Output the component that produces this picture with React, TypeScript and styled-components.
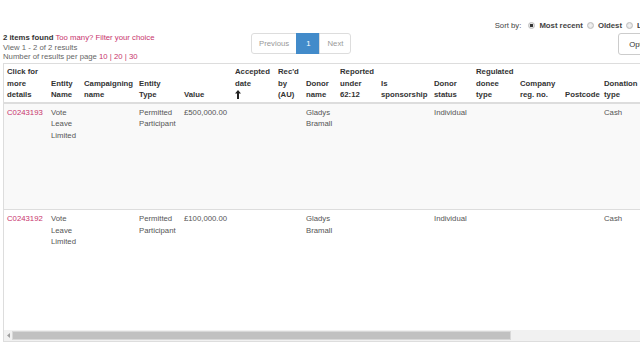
import styled, { createGlobalStyle } from "styled-components";

const GlobalStyle = createGlobalStyle`
  html, body {
    margin: 0;
    padding: 0;
    overflow: hidden;
    background: #fff;
  }
  body {
    font-family: "Liberation Sans", Arial, sans-serif;
    font-size: 7.75px;
    color: #333;
  }
`;

const PINK = "#c8336c";

const Page = styled.div`
  width: 700px;
  padding-top: 19px;
`;

//top bar
const SortRow = styled.div`
  height: 12px;
  padding-right: 35px;

  display: flex;
  justify-content: flex-end;
  align-items: center;
  gap: 4px;

  color: #444;
`;
const SortTitle = styled.span`
  margin-right: 3px;
`;
const RadioOption = styled.label`
  display: flex;
  align-items: center;
  gap: 4px;

  font-weight: bold;
  color: #444;
`;
const Radio = styled.input`
  appearance: none;
  width: 7px;
  height: 7px;
  margin: 0;
  border-radius: 50%;
  border: 1px solid #bdbdbd;
  background: radial-gradient(circle, #f4f4f4 0, #dcdcdc 100%);
  box-sizing: border-box;

  &:checked {
    background: radial-gradient(circle, #333 0 1.4px, #e6e6e6 1.8px);
  }
`;
const Toolbar = styled.div`
  height: 30px;
  margin-top: 2px;
  padding-right: 33px;

  display: flex;
  align-items: flex-start;
`;
const Info = styled.div`
  width: 251px;
  padding-left: 3px;
  box-sizing: border-box;

  line-height: 9.5px;
  color: #666;

  b {
    color: #333;
  }
`;
const PinkLink = styled.a`
  color: ${PINK};
  text-decoration: none;
`;
const Pager = styled.div`
  display: flex;
  height: 21px;
`;
const PageLink = styled.span<{ $active?: boolean; $first?: boolean; $last?: boolean }>`
  padding: 0 ${(p) => (p.$active ? 9 : 7)}px;
  margin-left: ${(p) => (p.$first ? 0 : -1)}px;
  line-height: 19px;

  border: 1px solid ${(p) => (p.$active ? "#428bca" : "#ddd")};
  border-radius: ${(p) => (p.$first ? "3px 0 0 3px" : p.$last ? "0 3px 3px 0" : "0")};
  background: ${(p) => (p.$active ? "#428bca" : "#fff")};
  color: ${(p) => (p.$active ? "#fff" : "#999")};
`;
const OptionsButton = styled.button`
  margin-left: auto;
  height: 22px;
  padding: 0 10px;

  font-family: inherit;
  font-size: 7.75px;
  color: #333;
  background: #fff;
  border: 1px solid #ccc;
  border-radius: 3px;
`;

//table
const TableWrap = styled.div`
  margin-left: 3px;
  width: 697px;
  height: 279px;
  box-sizing: border-box;
  border: 1px solid #ddd;

  display: flex;
  flex-direction: column;
`;
const TableView = styled.div`
  flex: 1;
  overflow: hidden;
`;
const Table = styled.table`
  width: 917px;
  border-collapse: collapse;
  table-layout: fixed;
`;
const Col = styled.col<{ $w: number }>`
  width: ${(p) => p.$w}px;
`;
const Th = styled.th`
  padding: 2px 3px 1px;
  vertical-align: bottom;
  text-align: left;

  font-weight: bold;
  line-height: 11.5px;
  color: #333;
  border-bottom: 2px solid #ddd;
`;
const Row = styled.tr<{ $striped?: boolean; $height: number }>`
  height: ${(p) => p.$height}px;
  background: ${(p) => (p.$striped ? "#f9f9f9" : "#fff")};
`;
const Td = styled.td`
  padding: 3px 3px;
  vertical-align: top;

  line-height: 11.5px;
  color: #555;
  border-top: 1px solid #ddd;
`;
const SortArrow = styled.span`
  height: 11.5px;

  display: flex;
  align-items: center;
`;

//scrollbar
const ScrollBar = styled.div`
  height: 11px;
  background: #f1f1f1;

  display: flex;
`;
const ScrollButton = styled.div`
  width: 8px;

  display: flex;
  justify-content: center;
  align-items: center;
`;
const ScrollTrack = styled.div`
  flex: 1;
  padding: 1px 0;
`;
const ScrollThumb = styled.div`
  height: 100%;
  box-sizing: border-box;
  background: #c1c1c1;
  border: 1px solid #d8d8d8;
`;

const columns: { title: React.ReactNode; w: number }[] = [
  { title: "Click for more details", w: 44 },
  { title: "Entity Name", w: 33 },
  { title: "Campaigning name", w: 55 },
  { title: "Entity Type", w: 45 },
  { title: "Value", w: 51 },
  {
    title: (
      <>
        Accepted date
        <SortArrow>
          <svg width="6" height="9" viewBox="0 0 6 9">
            <path d="M3 0 L6 3.6 H4 V9 H2 V3.6 H0 Z" fill="#222" />
          </svg>
        </SortArrow>
      </>
    ),
    w: 43,
  },
  { title: "Rec'd by (AU)", w: 28 },
  { title: "Donor name", w: 34 },
  { title: "Reported under 62:12", w: 41 },
  { title: "Is sponsorship", w: 53 },
  { title: "Donor status", w: 42 },
  { title: "Regulated donee type", w: 44 },
  { title: "Company reg. no.", w: 45 },
  { title: "Postcode", w: 39 },
  { title: "Donation type", w: 45 },
  { title: "Nature / Provision", w: 55 },
  { title: "Purpose of visit", w: 55 },
  { title: "Donation action", w: 55 },
  { title: "Received date", w: 55 },
  { title: "Reported date", w: 55 },
];

interface IDonation {
  ref: string;
  value: string;
  height: number;
}
const donations: IDonation[] = [
  { ref: "C0243193", value: "£500,000.00", height: 107 },
  { ref: "C0243192", value: "£100,000.00", height: 140 },
];

// visible part of the table, as a share of its full width
const visibleShare = 0.735;

function App() {
  return (
    <>
      <GlobalStyle />
      <Page>
        <SortRow>
          <SortTitle>Sort by:</SortTitle>
          <RadioOption>
            <Radio type="radio" name="sort" defaultChecked />
            Most recent
          </RadioOption>
          <RadioOption>
            <Radio type="radio" name="sort" />
            Oldest
          </RadioOption>
          <RadioOption>
            <Radio type="radio" name="sort" />
            Largest
          </RadioOption>
        </SortRow>
        <Toolbar>
          <Info>
            <div>
              <b>2 items found</b> <PinkLink href="#">Too many? Filter your choice</PinkLink>
            </div>
            <div>View 1 - 2 of 2 results</div>
            <div>
              Number of results per page <PinkLink href="#">10</PinkLink>{" "}
              <PinkLink as="span">|</PinkLink> <PinkLink href="#">20</PinkLink>{" "}
              <PinkLink as="span">|</PinkLink> <PinkLink href="#">30</PinkLink>
            </div>
          </Info>
          <Pager>
            <PageLink $first>Previous</PageLink>
            <PageLink $active>1</PageLink>
            <PageLink $last>Next</PageLink>
          </Pager>
          <OptionsButton>Options</OptionsButton>
        </Toolbar>
        <TableWrap>
          <TableView>
            <Table>
              <colgroup>
                {columns.map((c, i) => (
                  <Col key={i} $w={c.w} />
                ))}
              </colgroup>
              <thead>
                <tr>
                  {columns.map((c, i) => (
                    <Th key={i}>{c.title}</Th>
                  ))}
                </tr>
              </thead>
              <tbody>
                {donations.map((d, i) => (
                  <Row key={d.ref} $striped={i % 2 === 0} $height={d.height}>
                    <Td>
                      <PinkLink href="#">{d.ref}</PinkLink>
                    </Td>
                    <Td>Vote Leave Limited</Td>
                    <Td></Td>
                    <Td>Permitted Participant</Td>
                    <Td>{d.value}</Td>
                    <Td></Td>
                    <Td></Td>
                    <Td>Gladys Bramall</Td>
                    <Td></Td>
                    <Td></Td>
                    <Td>Individual</Td>
                    <Td></Td>
                    <Td></Td>
                    <Td></Td>
                    <Td>Cash</Td>
                    <Td></Td>
                    <Td></Td>
                    <Td></Td>
                    <Td></Td>
                    <Td></Td>
                  </Row>
                ))}
              </tbody>
            </Table>
          </TableView>
          <ScrollBar>
            <ScrollButton>
              <svg width="3" height="5" viewBox="0 0 3 5">
                <path d="M3 0 V5 L0 2.5 Z" fill="#a0a0a0" />
              </svg>
            </ScrollButton>
            <ScrollTrack>
              <ScrollThumb style={{ width: `${visibleShare * 100}%` }} />
            </ScrollTrack>
            <ScrollButton />
          </ScrollBar>
        </TableWrap>
      </Page>
    </>
  );
}

export default App;
